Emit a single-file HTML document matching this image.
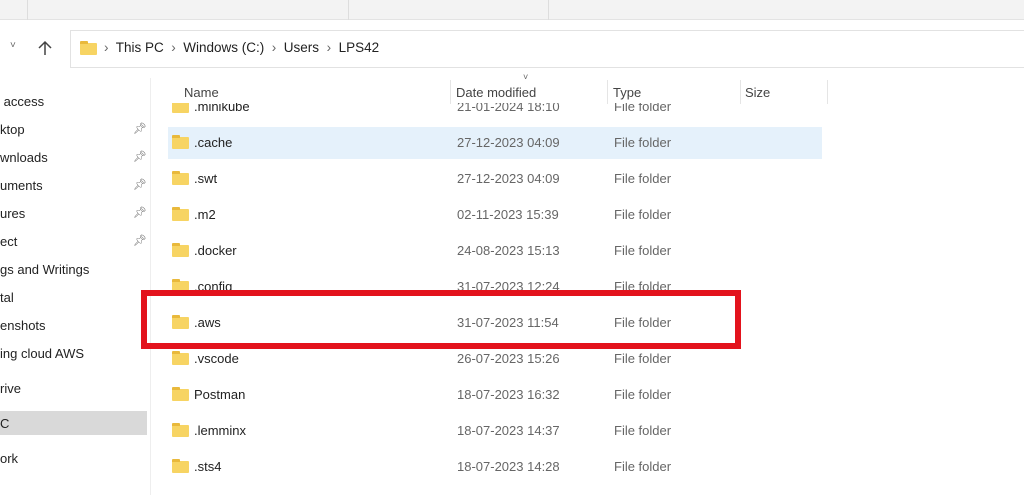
<!DOCTYPE html><html><head><style>
*{margin:0;padding:0;box-sizing:border-box}
body{width:1024px;height:495px;overflow:hidden;background:#fff;font-family:"Liberation Sans",sans-serif;color:#222;font-size:13px;position:relative}
.a{position:absolute;white-space:nowrap}
.g{color:#666}
.f{position:absolute;width:17px;height:12px;background:#f7d463;border-radius:1px}
.f:before{content:"";position:absolute;left:0;top:-2px;width:8px;height:3px;background:#e9b93c;border-radius:1px 1px 0 0}
.row{position:absolute;left:168px;width:654px;height:32px}
.row .n{position:absolute;left:26px;top:8px;font-size:13px;color:#222}
.row .f{left:4px;top:10px}
.row .d{position:absolute;left:289px;top:8px;color:#666}
.row .t{position:absolute;left:446px;top:8px;color:#666}
</style></head><body>
<div class="a" style="left:0;top:0;width:1024px;height:20px;background:#f3f3f3;border-bottom:1px solid #e3e3e3"></div>
<div class="a" style="left:27px;top:0;width:1px;height:20px;background:#ddd"></div>
<div class="a" style="left:348px;top:0;width:1px;height:20px;background:#ddd"></div>
<div class="a" style="left:548px;top:0;width:1px;height:20px;background:#ddd"></div>
<div class="a g" style="left:10px;top:40px;font-size:10px">˅</div>
<svg class="a" style="left:37px;top:40px" width="16" height="16"><path d="M8 2V15M2 8L8 2L14 8" stroke="#444" stroke-width="1.5" fill="none"/></svg>
<div class="a" style="left:70px;top:30px;width:960px;height:38px;border:1px solid #e2e2e2;background:#fff"></div>
<div class="f" style="left:80px;top:43px"></div>
<div class="a" style="left:104px;top:40px;font-size:13.5px"><span class="g">›</span>&nbsp; This PC &nbsp;<span class="g">›</span>&nbsp; Windows (C:) &nbsp;<span class="g">›</span>&nbsp; Users &nbsp;<span class="g">›</span>&nbsp; LPS42</div>
<div class="a" style="left:150px;top:78px;width:1px;height:417px;background:#eee"></div>
<div class="a" style="left:0;top:94px">&nbsp;access</div>
<div class="a" style="left:0;top:122px">ktop</div>
<div class="a" style="left:0;top:150px">wnloads</div>
<div class="a" style="left:0;top:178px">uments</div>
<div class="a" style="left:0;top:206px">ures</div>
<div class="a" style="left:0;top:234px">ect</div>
<div class="a" style="left:0;top:262px">gs and Writings</div>
<div class="a" style="left:0;top:290px">tal</div>
<div class="a" style="left:0;top:318px">enshots</div>
<div class="a" style="left:0;top:346px">ing cloud AWS</div>
<div class="a" style="left:0;top:381px">rive</div>
<div class="a" style="left:0;top:411px;width:147px;height:24px;background:#d9d9d9"></div>
<div class="a" style="left:0;top:416px">C</div>
<div class="a" style="left:0;top:451px">ork</div>
<div class="a g" style="left:133px;top:122px;font-size:11px">📌︎</div>
<div class="a g" style="left:133px;top:150px;font-size:11px">📌︎</div>
<div class="a g" style="left:133px;top:178px;font-size:11px">📌︎</div>
<div class="a g" style="left:133px;top:206px;font-size:11px">📌︎</div>
<div class="a g" style="left:133px;top:234px;font-size:11px">📌︎</div>

<div class="a" style="left:152px;top:103px;width:872px;height:392px;overflow:hidden">
<div style="position:absolute;left:-152px;top:-103px;width:1024px;height:495px">
<div class="row" style="top:91px"><div class="f"></div><div class="n">.minikube</div><div class="d">21-01-2024 18:10</div><div class="t">File folder</div></div>
<div class="row" style="top:127px;background:#e5f1fb"><div class="f"></div><div class="n">.cache</div><div class="d">27-12-2023 04:09</div><div class="t">File folder</div></div>
<div class="row" style="top:163px"><div class="f"></div><div class="n">.swt</div><div class="d">27-12-2023 04:09</div><div class="t">File folder</div></div>
<div class="row" style="top:199px"><div class="f"></div><div class="n">.m2</div><div class="d">02-11-2023 15:39</div><div class="t">File folder</div></div>
<div class="row" style="top:235px"><div class="f"></div><div class="n">.docker</div><div class="d">24-08-2023 15:13</div><div class="t">File folder</div></div>
<div class="row" style="top:271px"><div class="f"></div><div class="n">.config</div><div class="d">31-07-2023 12:24</div><div class="t">File folder</div></div>
<div class="row" style="top:307px"><div class="f"></div><div class="n">.aws</div><div class="d">31-07-2023 11:54</div><div class="t">File folder</div></div>
<div class="row" style="top:343px"><div class="f"></div><div class="n">.vscode</div><div class="d">26-07-2023 15:26</div><div class="t">File folder</div></div>
<div class="row" style="top:379px"><div class="f"></div><div class="n">Postman</div><div class="d">18-07-2023 16:32</div><div class="t">File folder</div></div>
<div class="row" style="top:415px"><div class="f"></div><div class="n">.lemminx</div><div class="d">18-07-2023 14:37</div><div class="t">File folder</div></div>
<div class="row" style="top:451px"><div class="f"></div><div class="n">.sts4</div><div class="d">18-07-2023 14:28</div><div class="t">File folder</div></div>
</div></div>
<div class="a" style="left:184px;top:85px;color:#444">Name</div>
<div class="a" style="left:456px;top:85px;color:#444">Date modified</div>
<div class="a g" style="left:523px;top:72px;font-size:9px">˅</div>
<div class="a" style="left:613px;top:85px;color:#444">Type</div>
<div class="a" style="left:745px;top:85px;color:#444">Size</div>
<div class="a" style="left:450px;top:80px;width:1px;height:24px;background:#e5e5e5"></div>
<div class="a" style="left:607px;top:80px;width:1px;height:24px;background:#e5e5e5"></div>
<div class="a" style="left:740px;top:80px;width:1px;height:24px;background:#e5e5e5"></div>
<div class="a" style="left:827px;top:80px;width:1px;height:24px;background:#e5e5e5"></div>
<div class="a" style="left:141px;top:290px;width:600px;height:59px;border:6px solid #e3131d"></div>
</body></html>
